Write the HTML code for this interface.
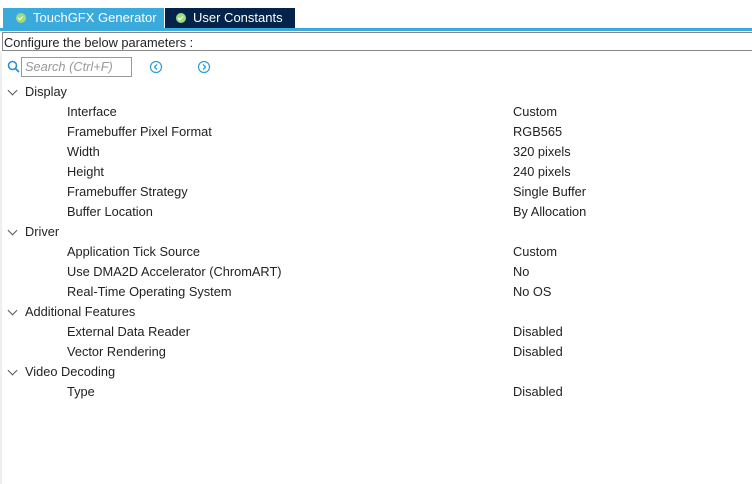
<!DOCTYPE html>
<html><head><style>
body{margin:0;width:752px;height:484px;background:#fff;font-family:"Liberation Sans",sans-serif;font-size:12.8px;color:#222;position:relative;overflow:hidden}
.a{position:absolute;white-space:nowrap}
.tab{position:absolute;top:8px;height:20px;color:#fff;font-size:13px;line-height:20px}
.chk{display:inline-block;width:10px;height:10px;border-radius:50%;background:#9fdc7a;position:relative;vertical-align:-1px;margin-right:7px}
.chk:after{content:"";position:absolute;left:3px;top:1.5px;width:2px;height:4px;border:solid #fff;border-width:0 1.5px 1.5px 0;transform:rotate(45deg)}
.r{position:absolute;height:20px;line-height:20px;left:0;width:752px}
.cat{position:absolute;left:25px}
.k{position:absolute;left:67px}
.v{position:absolute;left:513px}
.chev{position:absolute;left:9px;top:5px;width:6px;height:6px;border:solid #555;border-width:0 1px 1px 0;transform:rotate(45deg)}
</style></head><body>
<div class="a" style="left:0;top:52px;width:2px;height:432px;background:#eee"></div>
<div class="tab" style="left:3px;width:161px;background:#3aaadc;padding-left:13px;box-sizing:border-box"><span class="chk"></span>TouchGFX Generator</div>
<div class="tab" style="left:165px;width:130px;background:#03234b;padding-left:11px;box-sizing:border-box"><span class="chk"></span>User Constants</div>
<div class="a" style="left:0;top:28px;width:752px;height:3px;background:#3aaadc"></div>
<div class="a" style="left:2px;top:32px;width:750px;height:19px;border-top:1px solid #888;border-bottom:1px solid #888;border-left:1px solid #888;box-sizing:border-box"></div>
<div class="a" style="left:4px;top:35px;line-height:16px">Configure the below parameters :</div>
<svg class="a" style="left:7px;top:60px" width="14" height="14"><circle cx="5.5" cy="5.5" r="4" fill="none" stroke="#2a8fd0" stroke-width="1.6"/><line x1="8.5" y1="8.5" x2="12" y2="12" stroke="#2a8fd0" stroke-width="1.8"/></svg>
<div class="a" style="left:21px;top:57px;width:111px;height:20px;border:1px solid #999;box-sizing:border-box;color:#999;font-style:italic;line-height:18px;padding-left:3px">Search (Ctrl+F)</div>
<svg class="a" style="left:149px;top:60px" width="14" height="14"><circle cx="7" cy="7" r="5.5" fill="none" stroke="#2a9fdc" stroke-width="1.2"/><polyline points="8,4.5 5.5,7 8,9.5" fill="none" stroke="#2a9fdc" stroke-width="1.3"/></svg>
<svg class="a" style="left:197px;top:60px" width="14" height="14"><circle cx="7" cy="7" r="5.5" fill="none" stroke="#2a9fdc" stroke-width="1.2"/><polyline points="6,4.5 8.5,7 6,9.5" fill="none" stroke="#2a9fdc" stroke-width="1.3"/></svg>

<div class="r" style="top:82px"><i class="chev"></i><span class="cat">Display</span></div>
<div class="r" style="top:102px"><span class="k">Interface</span><span class="v">Custom</span></div>
<div class="r" style="top:122px"><span class="k">Framebuffer Pixel Format</span><span class="v">RGB565</span></div>
<div class="r" style="top:142px"><span class="k">Width</span><span class="v">320 pixels</span></div>
<div class="r" style="top:162px"><span class="k">Height</span><span class="v">240 pixels</span></div>
<div class="r" style="top:182px"><span class="k">Framebuffer Strategy</span><span class="v">Single Buffer</span></div>
<div class="r" style="top:202px"><span class="k">Buffer Location</span><span class="v">By Allocation</span></div>
<div class="r" style="top:222px"><i class="chev"></i><span class="cat">Driver</span></div>
<div class="r" style="top:242px"><span class="k">Application Tick Source</span><span class="v">Custom</span></div>
<div class="r" style="top:262px"><span class="k">Use DMA2D Accelerator (ChromART)</span><span class="v">No</span></div>
<div class="r" style="top:282px"><span class="k">Real-Time Operating System</span><span class="v">No OS</span></div>
<div class="r" style="top:302px"><i class="chev"></i><span class="cat">Additional Features</span></div>
<div class="r" style="top:322px"><span class="k">External Data Reader</span><span class="v">Disabled</span></div>
<div class="r" style="top:342px"><span class="k">Vector Rendering</span><span class="v">Disabled</span></div>
<div class="r" style="top:362px"><i class="chev"></i><span class="cat">Video Decoding</span></div>
<div class="r" style="top:382px"><span class="k">Type</span><span class="v">Disabled</span></div>
</body></html>
